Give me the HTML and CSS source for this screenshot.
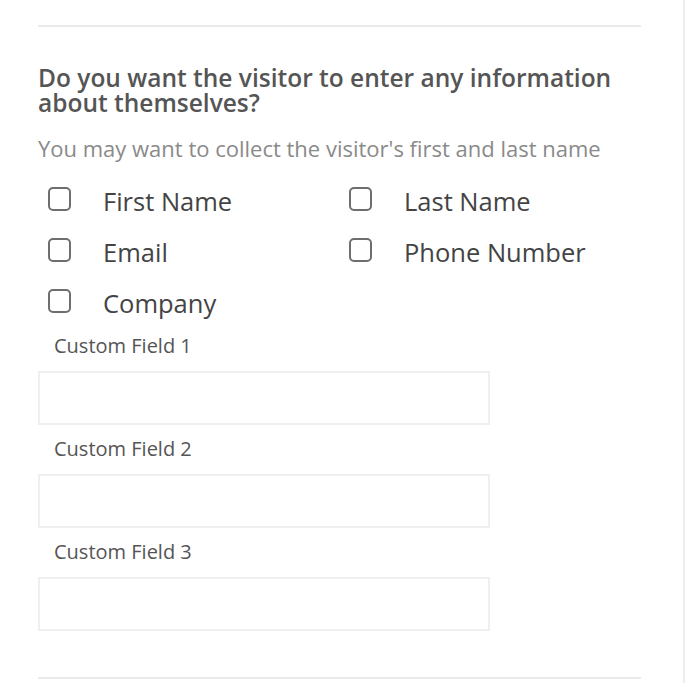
FILE: index.html
```html
<!DOCTYPE html>
<html>
<head>
<meta charset="utf-8">
<link rel="stylesheet" href="styles.css">
</head>
<body>
<div class="page">
  <div class="content">
    <div class="divider top"></div>
    <h2 class="title">Do you want the visitor to enter any information about themselves?</h2>
    <p class="subtitle">You may want to collect the visitor's first and last name</p>
    <div class="options">
      <label class="option"><span class="box"></span><span class="opt-label">First Name</span></label>
      <label class="option"><span class="box"></span><span class="opt-label">Last Name</span></label>
      <label class="option"><span class="box"></span><span class="opt-label">Email</span></label>
      <label class="option"><span class="box"></span><span class="opt-label">Phone Number</span></label>
      <label class="option"><span class="box"></span><span class="opt-label">Company</span></label>
    </div>
    <div class="fields">
      <div class="field">
        <div class="field-label">Custom Field 1</div>
        <div class="input"></div>
      </div>
      <div class="field">
        <div class="field-label">Custom Field 2</div>
        <div class="input"></div>
      </div>
      <div class="field">
        <div class="field-label">Custom Field 3</div>
        <div class="input"></div>
      </div>
    </div>
    <div class="divider bottom"></div>
  </div>
</div>
</body>
</html>
```

FILE: styles.css
```css
* { box-sizing: border-box; }
html, body { margin: 0; padding: 0; background: #fff; }
body { font-family: "Open Sans", "Liberation Sans", sans-serif; color: #555; }
.page {
  width: 685px;
  height: 683px;
  border-right: 2px solid #ececec;
  overflow: hidden;
}
.content {
  width: 641px;
  padding-left: 38px;
  padding-top: 25px;
}
.divider { height: 2px; background: #ebebeb; }
.title {
  margin: 38px 0 0;
  font-size: 24.5px;
  line-height: 25px;
  font-weight: 600;
  color: #555;
}
.subtitle {
  margin: 20px 0 0;
  font-size: 22px;
  line-height: 26px;
  color: #8a8a8a;
}
.options {
  display: grid;
  grid-template-columns: 301px 1fr;
  padding-left: 10px;
  margin-top: 12px;
}
.option {
  display: flex;
  align-items: center;
  height: 51px;
  gap: 32px;
}
.box {
  width: 23px;
  height: 24px;
  border: 2px solid #6e6e6e;
  border-radius: 5px;
  flex: none;
}
.opt-label {
  font-size: 25.5px;
  line-height: 30px;
  padding-top: 4px;
  color: #444;
}
.fields { margin-top: 8px; }
.field { margin-bottom: 12px; }
.field-label {
  padding-left: 16px;
  font-size: 20px;
  line-height: 24px;
  color: #555;
  margin-bottom: 13px;
}
.input {
  width: 452px;
  height: 54px;
  border: 2px solid #efefef;
  background: #fff;
}
.divider.bottom { margin-top: 46px; }
```
